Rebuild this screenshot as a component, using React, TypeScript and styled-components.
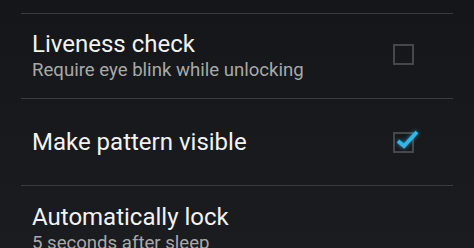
import React from 'react';
import styled, { createGlobalStyle } from 'styled-components';

const GlobalStyle = createGlobalStyle`
  html, body {
    margin: 0;
    padding: 0;
    background: #17191c;
    overflow: hidden;
  }
  body {
    font-family: Roboto, "Noto Sans", sans-serif;
  }
`;

const Screen = styled.div`
  width: 474px;
  height: 248px;
  padding: 13px 21px 0;
  box-sizing: border-box;
  background: linear-gradient(#141619, #1a1c1f);
  overflow: hidden;
`;

const Row = styled.div<{ $height: number }>`
  display: flex;
  align-items: center;
  height: ${({ $height }) => $height}px;
  border-top: 1px solid #393b3e;
  padding: 0 39px 0 11px;
`;

const TextBlock = styled.div`
  flex: 1;
  display: flex;
  flex-direction: column;
`;

const Title = styled.div`
  color: #f2f2f2;
  font-size: 24px;
  line-height: 28px;
`;

const Summary = styled.div`
  color: #a9a9a9;
  font-size: 18.6px;
  line-height: 25px;
`;

const Box = styled.div<{ $lift?: number }>`
  position: relative;
  width: 21px;
  height: 21px;
  box-sizing: border-box;
  border: 2px solid #45484b;
  flex-shrink: 0;
  margin-bottom: ${({ $lift }) => $lift ?? 0}px;
`;

const Check = styled.svg`
  position: absolute;
  left: 1px;
  top: -4px;
  width: 24px;
  height: 20px;
  filter: drop-shadow(0 0 2px rgba(51, 181, 229, 0.7));
`;

const Checkbox: React.FC<{ checked?: boolean; lift?: number }> = ({ checked, lift }) => (
  <Box $lift={lift}>
    {checked && (
      <Check viewBox="0 0 24 20">
        <path d="M2 11 L8 16 L21 2" fill="none" stroke="#33b5e5" strokeWidth="4" strokeLinejoin="miter" strokeLinecap="butt" />
      </Check>
    )}
  </Box>
);

const App: React.FC = () => (
  <>
    <GlobalStyle />
    <Screen>
      <Row $height={84}>
        <TextBlock>
          <Title>Liveness check</Title>
          <Summary>Require eye blink while unlocking</Summary>
        </TextBlock>
        <Checkbox lift={3} />
      </Row>
      <Row $height={86}>
        <TextBlock>
          <Title>Make pattern visible</Title>
        </TextBlock>
        <Checkbox checked />
      </Row>
      <Row $height={86}>
        <TextBlock>
          <Title>Automatically lock</Title>
          <Summary>5 seconds after sleep</Summary>
        </TextBlock>
      </Row>
    </Screen>
  </>
);

export default App;
